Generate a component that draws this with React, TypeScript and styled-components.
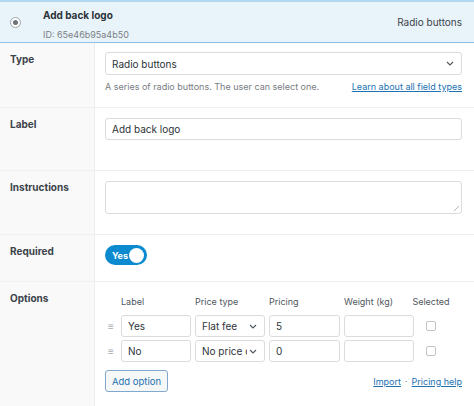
import React from "react";
import styled, { createGlobalStyle } from "styled-components";

const GlobalStyle = createGlobalStyle`
    html, body {
        margin: 0;
        padding: 0;
        background: #ffffff;
        font-family: Inter, "Noto Sans", "Liberation Sans", sans-serif;
        color: #1d2327;
    }
    * {
        box-sizing: border-box;
    }
`;

const Panel = styled.div`
    width: 474px;
    height: 406px;
    overflow: hidden;
    background: #ffffff;
`;

const Header = styled.div`
    display: flex;
    align-items: center;
    height: 43px;
    background: #e9f3fa;
    border-top: 2px solid #b3d7ef;
    border-bottom: 1px solid #8fc1e4;
    padding: 0 12px 0 10px;
`;

const RadioDot = styled.span`
    width: 11px;
    height: 11px;
    border-radius: 50%;
    border: 1px solid #9aa4ab;
    background: #ffffff;
    display: flex;
    align-items: center;
    justify-content: center;
    &::after {
        content: "";
        width: 5px;
        height: 5px;
        border-radius: 50%;
        background: #6b7378;
    }
`;

const HeaderText = styled.div`
    display: flex;
    flex-direction: column;
    gap: 8px;
    margin-left: 22px;
    margin-top: 4px;
    flex: 1;
`;

const HeaderTitle = styled.span`
    font-size: 10px;
    font-weight: 700;
    color: #2c3338;
`;

const HeaderId = styled.span`
    font-size: 9px;
    color: #7a8085;
`;

const HeaderType = styled.span`
    font-size: 10px;
    color: #3c434a;
`;

const Row = styled.div<{ $h: number; $last?: boolean }>`
    display: grid;
    grid-template-columns: 95px 1fr;
    height: ${({ $h }) => $h}px;
    border-bottom: ${({ $last }) => ($last ? "none" : "1px solid #f0f0f1")};
`;

const RowLabel = styled.div`
    background: #f9f9f9;
    border-right: 1px solid #ececec;
    padding: 9px 10px;
    font-size: 10px;
    font-weight: 700;
    line-height: 14px;
    color: #3c434a;
`;

const RowBody = styled.div<{ $top: number }>`
    padding: ${({ $top }) => $top}px 12px 0 10px;
    display: flex;
    flex-direction: column;
`;

const Field = styled.div<{ $h?: number }>`
    height: ${({ $h }) => $h ?? 22}px;
    border: 1px solid #dcdcde;
    border-radius: 3px;
    background: #ffffff;
    display: flex;
    align-items: center;
    justify-content: space-between;
    gap: 2px;
    padding: 0 7px 0 6px;
    font-size: 10px;
    color: #2c3338;
    position: relative;
    overflow: hidden;
    white-space: nowrap;
`;

const FieldText = styled.span`
    overflow: hidden;
    min-width: 0;
`;

const Chevron = () => (
    <svg width="8" height="5" viewBox="0 0 8 5" style={{ flexShrink: 0 }}>
        <path d="M1 1 L4 4 L7 1" fill="none" stroke="#50575e" strokeWidth="1.1" />
    </svg>
);

const Grip = styled.span`
    position: absolute;
    right: 2px;
    bottom: 2px;
    width: 5px;
    height: 5px;
    background: linear-gradient(135deg, transparent 45%, #b5b5b5 45%, #b5b5b5 55%, transparent 55%);
`;

const HelpLine = styled.div`
    display: flex;
    justify-content: space-between;
    margin-top: 6px;
    font-size: 9px;
    line-height: 12px;
    color: #787c82;
`;

const Link = styled.a`
    color: #2271b1;
    text-decoration: underline;
    font-size: 9px;
`;

const Toggle = styled.div`
    width: 42px;
    height: 20px;
    border-radius: 10px;
    background: #0c8ad0;
    display: flex;
    align-items: center;
    justify-content: space-between;
    padding: 0 3px 0 7px;
    font-size: 9px;
    font-weight: 700;
    color: #ffffff;
    &::after {
        content: "";
        width: 15px;
        height: 15px;
        border-radius: 50%;
        background: #ffffff;
    }
`;

const OptionsGrid = styled.div`
    display: grid;
    grid-template-columns: 12px 70px 70px 71px 70px 26px;
    column-gap: 4px;
    row-gap: 3px;
    align-items: center;
`;

const ColHead = styled.span<{ $center?: boolean }>`
    font-size: 9px;
    color: #50575e;
    text-align: ${({ $center }) => ($center ? "center" : "left")};
    justify-self: ${({ $center }) => ($center ? "center" : "stretch")};
    white-space: nowrap;
    margin-bottom: 5px;
`;

const Handle = styled.span`
    font-size: 10px;
    color: #a7aaad;
    text-align: center;
`;

const Check = styled.span`
    width: 10px;
    height: 10px;
    border: 1px solid #c3c4c7;
    border-radius: 2px;
    justify-self: center;
`;

const Footer = styled.div`
    display: flex;
    justify-content: space-between;
    align-items: center;
    margin-top: 8px;
`;

const AddButton = styled.button`
    height: 22px;
    padding: 0 6px;
    border: 1px solid #7fa9cf;
    border-radius: 3px;
    background: #f6f7f7;
    color: #2271b1;
    font-family: inherit;
    font-size: 9.5px;
`;

const Links = styled.div`
    display: flex;
    gap: 4px;
    font-size: 9px;
    color: #787c82;
`;

const options = [
    { label: "Yes", price: "Flat fee", pricing: "5" },
    { label: "No", price: "No price charge", pricing: "0" },
];

export default function App() {
    return (
        <Panel>
            <GlobalStyle />
            <Header>
                <RadioDot />
                <HeaderText>
                    <HeaderTitle>Add back logo</HeaderTitle>
                    <HeaderId>ID: 65e46b95a4b50</HeaderId>
                </HeaderText>
                <HeaderType>Radio buttons</HeaderType>
            </Header>
            <Row $h={65}>
                <RowLabel>Type</RowLabel>
                <RowBody $top={9}>
                    <Field $h={23}>
                        Radio buttons
                        <Chevron />
                    </Field>
                    <HelpLine>
                        <span>A series of radio buttons. The user can select one.</span>
                        <Link>Learn about all field types</Link>
                    </HelpLine>
                </RowBody>
            </Row>
            <Row $h={63}>
                <RowLabel>Label</RowLabel>
                <RowBody $top={10}>
                    <Field>Add back logo</Field>
                </RowBody>
            </Row>
            <Row $h={64}>
                <RowLabel>Instructions</RowLabel>
                <RowBody $top={10}>
                    <Field $h={33}>
                        <Grip />
                    </Field>
                </RowBody>
            </Row>
            <Row $h={47}>
                <RowLabel>Required</RowLabel>
                <RowBody $top={10}>
                    <Toggle>Yes</Toggle>
                </RowBody>
            </Row>
            <Row $h={124} $last>
                <RowLabel>Options</RowLabel>
                <RowBody $top={14}>
                    <OptionsGrid>
                        <span />
                        <ColHead>Label</ColHead>
                        <ColHead>Price type</ColHead>
                        <ColHead>Pricing</ColHead>
                        <ColHead>Weight (kg)</ColHead>
                        <ColHead $center>Selected</ColHead>
                        {options.map((o) => (
                            <React.Fragment key={o.label}>
                                <Handle>≡</Handle>
                                <Field>{o.label}</Field>
                                <Field>
                                    <FieldText>{o.price}</FieldText>
                                    <Chevron />
                                </Field>
                                <Field>{o.pricing}</Field>
                                <Field />
                                <Check />
                            </React.Fragment>
                        ))}
                    </OptionsGrid>
                    <Footer>
                        <AddButton>Add option</AddButton>
                        <Links>
                            <Link>Import</Link>
                            <span>·</span>
                            <Link>Pricing help</Link>
                        </Links>
                    </Footer>
                </RowBody>
            </Row>
        </Panel>
    );
}
